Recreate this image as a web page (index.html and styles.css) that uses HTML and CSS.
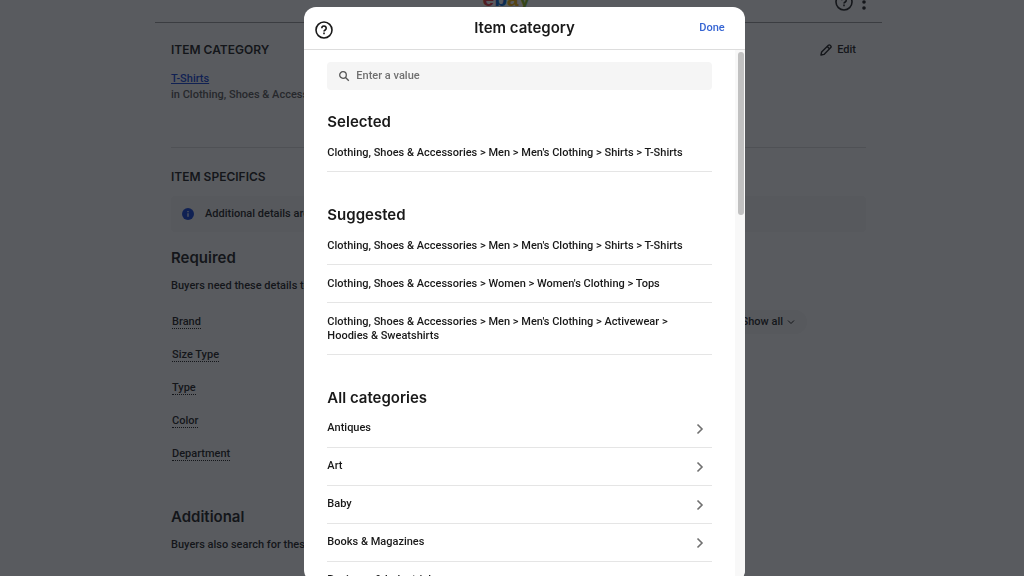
FILE: index.html
```html
<!DOCTYPE html>
<html lang="en">
<head>
  <meta charset="UTF-8" />
  <meta name="viewport" content="width=device-width, initial-scale=1.0"/>
  <title>Item category</title>
  <link rel="stylesheet" href="styles.css">
</head>
<body>

  <!-- Listing page -->
  <div class="page">
    <header class="site-header">
      <a href="#" class="logo" aria-label="ebay"><span class="red">e</span><span class="blue">b</span><span class="yellow">a</span><span class="green">y</span></a>
      <div class="header-actions">
        <button class="icon-button" aria-label="Help">
          <svg width="18" height="18" viewBox="0 0 18 18" fill="none" stroke="currentColor" stroke-width="1.6">
            <circle cx="9" cy="9" r="8"/>
            <path d="M6.8 7.2a2.2 2.2 0 1 1 3.4 1.8c-.8.5-1.2.8-1.2 1.4M9 11.6v1.6"/>
          </svg>
        </button>
        <button class="icon-button" aria-label="More">
          <svg width="4" height="18" viewBox="0 0 4 18" fill="currentColor">
            <circle cx="2" cy="3" r="1.8"/><circle cx="2" cy="9" r="1.8"/><circle cx="2" cy="15" r="1.8"/>
          </svg>
        </button>
      </div>
    </header>

    <main class="content">
      <section class="category">
        <div class="section-head">
          <h2>ITEM CATEGORY</h2>
          <button class="edit-button">
            <svg width="12" height="12" viewBox="0 0 12 12" fill="none" stroke="currentColor" stroke-width="1.4" stroke-linejoin="round">
              <path d="M1 11l.6-3L8.4 1.2a1.2 1.2 0 0 1 1.700 0l.7.7a1.2 1.2 0 0 1 0 1.700L4 10.400zM7.2 2.6l2.2 2.2"/>
            </svg>
            Edit
          </button>
        </div>
        <a href="#" class="category-link">T-Shirts</a>
        <p class="category-path">in Clothing, Shoes &amp; Accessories</p>
      </section>

      <section class="specifics">
        <h2>ITEM SPECIFICS</h2>
        <div class="notice">
          <svg width="12" height="12" viewBox="0 0 12 12">
            <circle cx="6" cy="6" r="6" fill="#0d3fd8"/>
            <path d="M6 5.2v3.6M6 3v1.2" stroke="#fff" stroke-width="1.2"/>
          </svg>
          <span>Additional details are available</span>
        </div>

        <h3>Required</h3>
        <p>Buyers need these details to find your item.</p>
        <div class="fields">
          <ul class="field-list">
            <li><button>Brand</button></li>
            <li><button>Size Type</button></li>
            <li><button>Type</button></li>
            <li><button>Color</button></li>
            <li><button>Department</button></li>
          </ul>
          <button class="show-all">
            Show all
            <svg width="8" height="6" viewBox="0 0 8 6" fill="none" stroke="currentColor"><path d="M1 1.5l3 3 3-3"/></svg>
          </button>
        </div>

        <h3>Additional</h3>
        <p>Buyers also search for these details.</p>
      </section>
    </main>
  </div>

  <div class="overlay"></div>

  <!-- Category picker -->
  <div class="modal" role="dialog" aria-labelledby="modalTitle">
    <div class="modal-header">
      <button class="icon-button" aria-label="Help">
        <svg width="18" height="18" viewBox="0 0 18 18" fill="none" stroke="currentColor" stroke-width="1.6">
          <circle cx="9" cy="9" r="8"/>
          <path d="M6.8 7.2a2.2 2.2 0 1 1 3.4 1.8c-.8.5-1.2.8-1.2 1.4M9 11.6v1.6"/>
        </svg>
      </button>
      <h1 id="modalTitle">Item category</h1>
      <button class="done-button">Done</button>
    </div>

    <div class="modal-body">
      <div class="modal-content">
        <label class="search">
          <svg width="12" height="12" viewBox="0 0 12 12" fill="none" stroke="currentColor" stroke-width="1.3">
            <circle cx="5" cy="5" r="3.3"/>
            <path d="M7.5 7.5l3.300 3.300"/>
          </svg>
          <input type="text" placeholder="Enter a value" aria-label="Search categories">
        </label>

        <h2>Selected</h2>
        <ul class="rows">
          <li><button>Clothing, Shoes &amp; Accessories &gt; Men &gt; Men's Clothing &gt; Shirts &gt; T-Shirts</button></li>
        </ul>

        <h2>Suggested</h2>
        <ul class="rows">
          <li><button>Clothing, Shoes &amp; Accessories &gt; Men &gt; Men's Clothing &gt; Shirts &gt; T-Shirts</button></li>
          <li><button>Clothing, Shoes &amp; Accessories &gt; Women &gt; Women's Clothing &gt; Tops</button></li>
          <li><button>Clothing, Shoes &amp; Accessories &gt; Men &gt; Men's Clothing &gt; Activewear &gt; Hoodies &amp; Sweatshirts</button></li>
        </ul>

        <h2>All categories</h2>
        <ul class="rows arrows">
          <li><button>Antiques <svg width="8" height="12" viewBox="0 0 8 12"><path d="M1.5 1.5L6 6l-4.500 4.500"/></svg></button></li>
          <li><button>Art <svg width="8" height="12" viewBox="0 0 8 12"><path d="M1.5 1.5L6 6l-4.500 4.500"/></svg></button></li>
          <li><button>Baby <svg width="8" height="12" viewBox="0 0 8 12"><path d="M1.5 1.5L6 6l-4.500 4.500"/></svg></button></li>
          <li><button>Books &amp; Magazines <svg width="8" height="12" viewBox="0 0 8 12"><path d="M1.5 1.5L6 6l-4.500 4.500"/></svg></button></li>
          <li><button>Business &amp; Industrial <svg width="8" height="12" viewBox="0 0 8 12"><path d="M1.5 1.5L6 6l-4.500 4.500"/></svg></button></li>
        </ul>
      </div>
      <div class="scrollbar"><div class="thumb"></div></div>
    </div>
  </div>

</body>
</html>
```
FILE: styles.css
```css
* {
  box-sizing: border-box;
}
body {
  margin: 0;
  height: 100vh;
  overflow: hidden;
  font-family: Roboto, "Liberation Sans", sans-serif;
  font-size: 11px;
  font-weight: 500;
  line-height: 14px;
  color: #191919;
  background-color: white;
}
h1, h2, h3, p, ul {
  margin: 0;
  padding: 0;
}
h1, h2, h3 {
  font-family: Inter, "Liberation Sans", sans-serif;
  font-size: 15px;
  font-weight: 600;
  line-height: 20px;
}
ul {
  list-style: none;
}
button {
  padding: 0;
  border: none;
  background: none;
  font: inherit;
  color: inherit;
  cursor: pointer;
}
svg {
  display: block;
  flex: none;
}

/* Listing page */
.page {
  max-width: 740px;
  margin: 0 auto;
  padding-left: 13px;
}
.site-header {
  display: flex;
  justify-content: center;
  height: 44px;
  margin-top: -21px;
  padding-right: 24px;
  border-bottom: 1px solid #999;
  position: relative;
}
.logo {
  padding-top: 7px;
  font-family: "Liberation Sans", sans-serif;
  font-size: 21px;
  font-weight: bold;
  line-height: 26px;
  text-decoration: none;
}
.red { color: #e53238; }
.blue { color: #0064d2; }
.yellow { color: #f5af02; }
.green { color: #86b817; }
.header-actions {
  position: absolute;
  right: 16px;
  top: 14px;
  display: flex;
  gap: 9px;
}
.content {
  padding: 0 16px;
}
.content h2 {
  font-size: 12px;
  line-height: 16px;
}
.category {
  height: 125px;
  padding-top: 19px;
  border-bottom: 1px solid #ddd;
}
.section-head {
  display: flex;
  justify-content: space-between;
  margin-bottom: 14px;
}
.edit-button {
  display: flex;
  align-items: center;
  gap: 5px;
  margin-right: 10px;
}
.category-link {
  color: #0d3fd8;
}
.category-path {
  margin-top: 2px;
  color: #555;
}
.specifics {
  padding-top: 21px;
}
.notice {
  display: flex;
  align-items: center;
  gap: 11px;
  height: 36px;
  margin: 11px 0 16px;
  padding: 0 11px;
  border-radius: 4px;
  background-color: #f7f7f7;
}
.content h3 + p {
  margin-top: 11px;
}
.fields {
  display: flex;
  justify-content: space-between;
  align-items: flex-start;
  margin: 13px 0 36px;
}
.field-list {
  padding-left: 1px;
}
.field-list li {
  display: flex;
  align-items: center;
  height: 33px;
}
.field-list button {
  border-bottom: 1px dotted #191919;
  line-height: 12px;
}
.show-all {
  display: flex;
  align-items: center;
  gap: 4px;
  height: 24px;
  margin: 4px 59px 0 0;
  padding: 0 12px;
  border-radius: 12px;
  background-color: #f7f7f7;
}

.overlay {
  position: fixed;
  inset: 0;
  background-color: rgba(18, 22, 27, 0.7);
}

/* Category picker */
.modal {
  position: fixed;
  top: 7px;
  bottom: -6px;
  left: 25px;
  right: 0;
  width: 43%;
  min-width: 320px;
  margin: 0 auto;
  display: flex;
  flex-direction: column;
  border-radius: 12px;
  background-color: white;
  overflow: hidden;
}
.modal-header {
  flex: none;
  display: grid;
  grid-template-columns: 1fr auto 1fr;
  align-items: center;
  height: 43px;
  padding: 0 20px;
  border-bottom: 1px solid #ddd;
}
.modal-header .icon-button {
  justify-self: start;
  margin-left: -9px;
  padding-top: 4px;
}
.done-button {
  justify-self: end;
  color: #3665d3;
}
.modal-body {
  flex: 1;
  display: flex;
  min-height: 0;
}
.modal-content {
  flex: 1;
  padding: 12px 23px 0;
  overflow: hidden;
}
.search {
  display: flex;
  align-items: center;
  gap: 6px;
  height: 28px;
  margin-bottom: 22px;
  padding: 0 11px;
  border-radius: 4px;
  background-color: #f5f5f5;
  color: #555;
}
.search input {
  flex: 1;
  padding: 0;
  border: none;
  outline: none;
  background: none;
  font: inherit;
}
.search input::placeholder {
  color: #707070;
}
.modal-content h2 {
  margin-bottom: 2px;
}
.rows {
  margin-bottom: 33px;
}
.rows li {
  border-bottom: 1px solid #e5e5e5;
}
.rows button {
  display: block;
  width: 100%;
  padding: 12px 8px 11px 0;
  text-align: left;
}
.arrows button {
  display: flex;
  justify-content: space-between;
  align-items: flex-end;
  padding-top: 11px;
  padding-bottom: 12px;
}
.arrows svg {
  fill: none;
  stroke: #707070;
  stroke-width: 1.6;
}
.scrollbar {
  flex: none;
  width: 10px;
  padding: 2px 1px 0 3px;
  background-color: #f8f8f8;
}
.thumb {
  height: 163px;
  border-radius: 3px;
  background-color: #c1c1c1;
}
```
